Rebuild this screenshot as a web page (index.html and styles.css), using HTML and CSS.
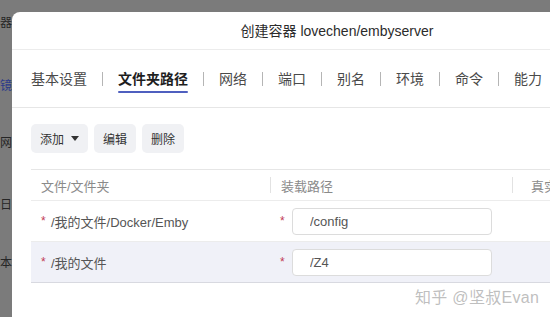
FILE: index.html
```html
<!DOCTYPE html>
<html>
<head>
    <meta charset="utf-8" />
    <meta name="viewport" content="width=device-width, initial-scale=1.0" />
    <title>创建容器</title>
    <link rel="stylesheet" href="styles.css">
</head>
<body>
    <div class="behind">
        <span class="b1">器</span>
        <span class="b2">镜</span>
        <span class="b3">网</span>
        <span class="b4">日</span>
        <span class="b5">本</span>
    </div>

    <div class="modal">
        <div class="modal-title">创建容器 lovechen/embyserver</div>

        <div class="tabs">
            <span class="tab">基本设置</span>
            <span class="sep"></span>
            <span class="tab active">文件夹路径</span>
            <span class="sep"></span>
            <span class="tab">网络</span>
            <span class="sep"></span>
            <span class="tab">端口</span>
            <span class="sep"></span>
            <span class="tab">别名</span>
            <span class="sep"></span>
            <span class="tab">环境</span>
            <span class="sep"></span>
            <span class="tab">命令</span>
            <span class="sep"></span>
            <span class="tab">能力</span>
        </div>

        <div class="content">
            <div class="toolbar">
                <button class="btn">添加 <span class="caret"></span></button>
                <button class="btn">编辑</button>
                <button class="btn">删除</button>
            </div>

            <div class="table">
                <div class="row head">
                    <div class="cell c1">文件/文件夹</div>
                    <div class="cell c2">装载路径</div>
                    <div class="cell c3">真实路径</div>
                </div>
                <div class="row">
                    <div class="cell c1"><span class="req">*</span>/我的文件/Docker/Emby</div>
                    <div class="cell c2"><span class="req">*</span><input class="path-input" value="/config"></div>
                    <div class="cell c3"></div>
                </div>
                <div class="row selected">
                    <div class="cell c1"><span class="req">*</span>/我的文件</div>
                    <div class="cell c2"><span class="req">*</span><input class="path-input" value="/Z4"></div>
                    <div class="cell c3"></div>
                </div>
            </div>
        </div>
    </div>

    <div class="watermark">知乎 @坚叔Evan</div>
</body>
</html>
```

FILE: styles.css
```css
body {
    font-family: "Liberation Sans", "Noto Sans CJK SC", sans-serif;
    margin: 0;
    background: #7b7b7b;
    display: flex;
    height: 317px;
    overflow: hidden;
    position: relative;
}
.behind {
    width: 12px;
    flex-shrink: 0;
    display: flex;
    flex-direction: column;
    align-items: flex-end;
    overflow: hidden;
    font-size: 12px;
    color: #262626;
}
.behind span {
    white-space: nowrap;
    line-height: 16px;
}
.b1 { margin-top: 15px; }
.b2 { margin-top: 47px; color: #2b3a8a; }
.b3 { margin-top: 41px; }
.b4 { margin-top: 46px; }
.b5 { margin-top: 42px; }
.modal {
    margin-top: 12px;
    width: 658px;
    flex-shrink: 0;
    background: white;
    border-radius: 8px 8px 0 0;
}
.modal-title {
    height: 37px;
    line-height: 38px;
    text-align: center;
    font-size: 14px;
    color: #2b2b2b;
    border-bottom: 1px solid #ececec;
    padding-right: 8px;
}
.tabs {
    height: 57px;
    display: flex;
    align-items: center;
    gap: 15px;
    padding-left: 19px;
    border-bottom: 1px solid #e6e6e6;
}
.tab {
    font-size: 14px;
    color: #4a4a4a;
    line-height: 20px;
    position: relative;
}
.tab.active {
    color: #1e1e1e;
    font-weight: bold;
}
.tab.active::after {
    content: "";
    position: absolute;
    left: 0;
    right: 0;
    bottom: -4px;
    height: 2px;
    background: #4f5fbf;
    border-radius: 1px;
}
.sep {
    width: 1px;
    height: 14px;
    background: #b5b5b5;
    margin-top: 1px;
}
.content {
    padding: 16px 0 0 19px;
}
.toolbar {
    display: flex;
    gap: 6px;
}
.btn {
    font-family: inherit;
    font-size: 12px;
    color: #333;
    background: #f0f1f4;
    border: none;
    border-radius: 5px;
    height: 29px;
    padding: 0 9px;
    display: inline-flex;
    align-items: center;
    gap: 7px;
}
.caret {
    width: 0;
    height: 0;
    border-left: 4px solid transparent;
    border-right: 4px solid transparent;
    border-top: 5px solid #333;
}
.table {
    margin-top: 16px;
    border-top: 1px solid #e6e6e6;
}
.row {
    display: flex;
    height: 40px;
    align-items: center;
    border-bottom: 1px solid #ececec;
    font-size: 13px;
    color: #555;
}
.row.head {
    height: 30px;
    color: #8a8a8a;
}
.row.selected {
    background: #f0f1f8;
    border-bottom-color: #d8d9e0;
}
.cell {
    display: flex;
    align-items: center;
    flex-shrink: 0;
    padding-left: 10px;
    box-sizing: border-box;
    white-space: nowrap;
}
.c1 { width: 239px; }
.c2 { width: 242px; }
.c3 { width: 158px; padding-left: 18px; }
.head .c2, .head .c3 {
    border-left: 1px solid #e2e2e2;
    height: 16px;
}
.req {
    color: #c23a55;
    width: 10px;
    font-size: 12px;
}
.c2 .req {
    width: 12px;
}
.path-input {
    font-family: inherit;
    font-size: 13px;
    color: #555;
    width: 200px;
    height: 27px;
    box-sizing: border-box;
    border: 1px solid #dcdcdc;
    border-radius: 4px;
    padding: 0 0 0 17px;
    background: white;
}
.watermark {
    position: absolute;
    left: 415px;
    top: 284px;
    font-size: 16px;
    color: rgba(170, 170, 170, 0.75);
    letter-spacing: 0.3px;
}
```
